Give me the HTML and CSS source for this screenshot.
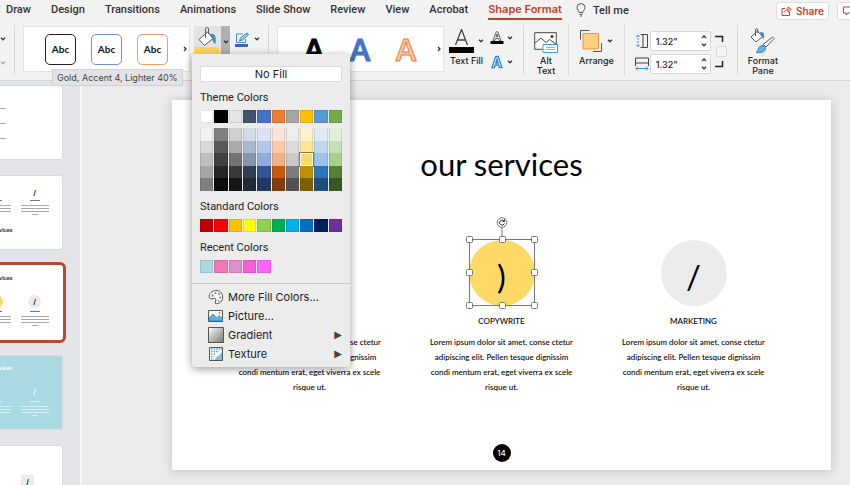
FILE: index.html
```html
<!DOCTYPE html>
<html lang="en">

<head>
    <meta charset="UTF-8">
    <meta name="viewport" content="width=device-width, initial-scale=1.0">
    <title>Our services</title>
    <link rel="stylesheet" href="styles.css">
</head>

<body>
    <!-- Shared caret shapes -->
    <svg class="defs" width="0" height="0" aria-hidden="true">
        <symbol id="down" viewBox="0 0 6 4"><path d="M1 .8l2 2 2-2" /></symbol>
        <symbol id="up" viewBox="0 0 6 4"><path d="M1 3l2-2 2 2" /></symbol>
        <symbol id="right" viewBox="0 0 4 6"><path d="M1 1l2 2-2 2" /></symbol>
    </svg>

    <header>
        <nav class="tabs">
            <a href="#">Draw</a>
            <a href="#">Design</a>
            <a href="#">Transitions</a>
            <a href="#">Animations</a>
            <a href="#">Slide Show</a>
            <a href="#">Review</a>
            <a href="#">View</a>
            <a href="#">Acrobat</a>
            <a href="#" class="active">Shape Format</a>
            <a href="#" class="tell">
                <svg width="10" height="14" viewBox="0 0 10 14" fill="none" stroke="#555"><path d="M3.2 9.5C3.2 7.500 1 7 1 4.600a4 4 0 0 1 8 0C9 7 6.800 7.500 6.800 9.500zM3.300 11.300h3.400M4 13h2" /></svg>
                Tell me
            </a>
            <div class="tab-actions">
                <button class="share">
                    <svg width="11" height="10" viewBox="0 0 11 10" fill="none" stroke="#c0442c"><path d="M4 2.500H1v7h7.500V6M3.300 6.500C3.500 4.500 5 3.700 7 3.700M7 1.200v5L10.300 3.500 7 1z" /></svg>
                    Share
                </button>
                <button class="share comments" aria-label="Comments">
                    <svg width="12" height="10" viewBox="0 0 12 10" fill="none" stroke="#c0442c"><path d="M.5 1h11v6H5L3 9V7H.500z" /></svg>
                </button>
            </div>
        </nav>

        <div class="ribbon">
            <div class="group first">
                <svg class="caret" width="6" height="4"><use href="#down" /></svg>
                <svg class="caret faded" width="6" height="4"><use href="#down" /></svg>
            </div>

            <div class="group shapes">
                <div class="gallery">
                    <button class="style-box">Abc</button>
                    <button class="style-box blue">Abc</button>
                    <button class="style-box orange">Abc</button>
                    <button class="more" aria-label="More styles"><svg class="caret" width="4" height="6"><use href="#right" /></svg></button>
                    <div class="tooltip" role="tooltip">Gold, Accent 4, Lighter 40%</div>
                </div>
                <div class="fill-split">
                    <button class="fill" aria-label="Shape Fill">
                        <svg width="25" height="28" viewBox="0 0 25 28" fill="none">
                            <path d="M16 8c5-1 6.500 2 5.500 10-2-.5-3-3-3.200-6z" fill="#3d8fc8" />
                            <path d="M5 13.500L13.500 6l5.500 6.500-8.500 7z" fill="#fff" stroke="#555" />
                            <path d="M11.500 12V3c0-2 3-2 3 0v5" stroke="#555" />
                            <path d="M0 21h25v6.500H0z" fill="#ffd55e" />
                        </svg>
                    </button>
                    <button class="fill-arrow" aria-label="Shape Fill options"><svg class="caret" width="6" height="4"><use href="#down" /></svg></button>

                    <div class="fill-menu">
                        <button class="no-fill">No Fill</button>
                        <h2>Theme Colors</h2>
                        <div class="swatches" id="theme"></div>
                        <div class="swatches shades" id="shades"></div>
                        <h2>Standard Colors</h2>
                        <div class="swatches" id="standard"></div>
                        <h2>Recent Colors</h2>
                        <div class="swatches" id="recent"></div>
                        <hr>
                        <button class="item">
                            <svg width="16" height="16" viewBox="0 0 16 16" fill="none">
                                <path d="M7.500 14.500c-.5-2 .8-3 .3-4.500C7 8.200 4.500 10.500 2.500 9.800.500 9 .8 5.500 3 3.500 5.500 1 10 .800 12.500 3c3 2.600 2.600 7.500.3 10-1.500 1.600-4 2-5.300 1.500z" fill="#fff" stroke="#555" />
                                <circle cx="4.500" cy="6.500" r="1" fill="#e0404a" /><circle cx="7.500" cy="4" r="1" fill="#4a90d9" /><circle cx="11" cy="5" r="1" fill="#58a849" /><circle cx="12.300" cy="8.500" r="1" fill="#b05ac0" /><circle cx="10.500" cy="12" r="1" fill="#e58a3a" />
                            </svg>
                            More Fill Colors...
                        </button>
                        <button class="item">
                            <svg width="16" height="16" viewBox="0 0 16 16">
                                <path d="M.5 2.500h14v11H.500z" fill="#fff" stroke="#555" />
                                <path d="M1 10l4-4 3.500 4L11 7.500l3.500 3V13H1z" fill="#62aee4" stroke="#2677b5" stroke-width=".7" />
                                <circle cx="11.500" cy="5" r="1.200" fill="#f0a04c" />
                            </svg>
                            Picture...
                        </button>
                        <button class="item">
                            <svg width="16" height="16" viewBox="0 0 16 16">
                                <defs><linearGradient id="grey" x1="0" y1="0" x2="1" y2="1"><stop offset="0" stop-color="#fff" /><stop offset="1" stop-color="#777" /></linearGradient></defs>
                                <path d="M.5.5h15v15H.500z" fill="url(#grey)" stroke="#555" />
                            </svg>
                            Gradient
                            <span class="arrow">▶</span>
                        </button>
                        <button class="item">
                            <svg width="16" height="16" viewBox="0 0 16 16">
                                <path d="M1.500 1.500h13v13h-13z" fill="#fff" stroke="#555" />
                                <path d="M3 3h11M3 5.500h8M3 8h5M3 10.500h3M3 13h3" stroke="#5aa9dd" stroke-width="1.500" stroke-dasharray="1.500 1" />
                                <path d="M14 6v8H7c0-2 1-3 2.500-3.500S11.500 8 14 6z" fill="#7dbde8" />
                            </svg>
                            Texture
                            <span class="arrow">▶</span>
                        </button>
                    </div>
                </div>
                <button class="outline" aria-label="Shape Outline">
                    <svg width="15" height="15" viewBox="0 0 15 15" fill="none">
                        <path d="M8 2H1.500v8.500h9V7" stroke="#3c8fd0" />
                        <path d="M4.500 9l1-3L12 1l1.500 1.500L7.500 8z" fill="#9fd0f2" stroke="#2d82bd" />
                        <path d="M0 12h13v3H0z" fill="#3f62b5" />
                    </svg>
                    <svg class="caret" width="6" height="4"><use href="#down" /></svg>
                </button>
            </div>

            <div class="group wordart">
                <div class="gallery">
                    <button class="letter">A</button>
                    <button class="letter blue">A</button>
                    <button class="letter orange">A</button>
                    <button class="more" aria-label="More text styles"><svg class="caret" width="4" height="6"><use href="#right" /></svg></button>
                </div>
                <button class="tool text-fill">
                    <span class="pic">
                        <svg width="25" height="24" viewBox="0 0 25 24" fill="none"><path d="M6.500 16l6-15.500 6 15.500M8.500 11h8" stroke="#444" stroke-width="1.300" /><path d="M0 18h25v6H0z" fill="#000" /></svg>
                        <svg class="caret" width="6" height="4"><use href="#down" /></svg>
                    </span>
                    Text Fill
                </button>
                <div class="stack">
                    <button class="mini" aria-label="Text Outline">
                        <svg width="14" height="14" viewBox="0 0 14 14" fill="none"><path d="M3 9.500L6.300.7h1.400L11 9.500H9.300L8.500 7.500h-3L4.700 9.500zM6 5.700h2L7 3z" stroke="#555" stroke-width=".9" /><path d="M.5 10h13v3H.500z" fill="#000" /></svg>
                        <svg class="caret" width="6" height="4"><use href="#down" /></svg>
                    </button>
                    <button class="mini" aria-label="Text Effects">
                        <svg width="14" height="14" viewBox="0 0 14 14" fill="#fff"><path d="M2 12.500L5.800 1.500h2.400L12 12.500H9.500L8.800 10H5.200L4.500 12.500zM5.800 8h2.400L7 4.200z" stroke="#2d82cf" stroke-width="1.300" /></svg>
                        <svg class="caret" width="6" height="4"><use href="#down" /></svg>
                    </button>
                </div>
            </div>

            <div class="group">
                <button class="tool">
                    <span class="pic">
                        <svg width="24" height="24" viewBox="0 0 24 24" fill="none">
                            <path d="M.7 3.700h21.600v16.600H.700z" fill="#fff" stroke="#444" />
                            <path d="M1 14l6-5 5 4.500 3.500-3L22 15" stroke="#444" />
                            <circle cx="18" cy="7.500" r="1.500" fill="#333" />
                            <path d="M9 15.500h14.500v8H9z" fill="#fff" stroke="#3c9adb" />
                            <path d="M12 18.500h9M12 20.500h9" stroke="#999" stroke-width=".8" />
                        </svg>
                    </span>
                    Alt<br>Text
                </button>
            </div>

            <div class="group">
                <button class="tool">
                    <span class="pic">
                        <svg width="24" height="24" viewBox="0 0 24 24" fill="none">
                            <path d="M1.500 10.500v-9h9M22.500 14v8.500H14" stroke="#555" />
                            <path d="M4 4.500h15.500V20H4z" fill="#fbd27d" stroke="#dd9b3c" />
                        </svg>
                        <svg class="caret" width="6" height="4"><use href="#down" /></svg>
                    </span>
                    Arrange
                </button>
            </div>

            <div class="group size">
                <div class="fields">
                    <label class="field">
                        <svg width="14" height="14" viewBox="0 0 14 14" fill="none"><path d="M3 1v12M1 3l2-2 2 2M1 11l2 2 2-2" stroke="#3c8fd0" stroke-dasharray="2 1" /><path d="M8 .5h4.500v13H8zM5.500.5H8M5.500 13.500H8" stroke="#444" /></svg>
                        <span class="spin">
                            <input type="text" value="1.32&quot;" aria-label="Height">
                            <span class="steps"><svg class="caret" width="6" height="4"><use href="#up" /></svg><svg class="caret" width="6" height="4"><use href="#down" /></svg></span>
                        </span>
                    </label>
                    <label class="field">
                        <svg width="14" height="14" viewBox="0 0 14 14" fill="none"><path d="M.5 1h13v5H.500zM.5 6v3M13.500 6v3" stroke="#444" /><path d="M1 11.500h12M3 9.500l-2 2 2 2M11 9.500l2 2-2 2" stroke="#3c8fd0" /></svg>
                        <span class="spin">
                            <input type="text" value="1.32&quot;" aria-label="Width">
                            <span class="steps"><svg class="caret" width="6" height="4"><use href="#up" /></svg><svg class="caret" width="6" height="4"><use href="#down" /></svg></span>
                        </span>
                    </label>
                </div>
                <div class="lock">
                    <svg width="9" height="7" viewBox="0 0 9 7" fill="none"><path d="M0 1.500h7.500V7" stroke="#222" stroke-width="1.500" /></svg>
                    <input type="checkbox" aria-label="Lock aspect ratio">
                    <svg width="9" height="7" viewBox="0 0 9 7" fill="none"><path d="M0 5.500h7.500V0" stroke="#222" stroke-width="1.500" /></svg>
                </div>
            </div>

            <div class="group last">
                <button class="tool">
                    <span class="pic">
                        <svg width="25" height="26" viewBox="0 0 25 26" fill="none">
                            <path d="M10 4c4-.5 4.500 2 4 7-1.500-1-2.500-2.500-3-4z" fill="#3d8fc8" />
                            <path d="M1 9l6.500-6 5 5.500-6.500 5.500z" fill="#fff" stroke="#555" />
                            <path d="M5.500 8V2c0-1.600 2.300-1.600 2.300 0v3" stroke="#555" />
                            <path d="M13 16.500L22.500 9l1.500 1.500-8 8.500z" fill="#fff" stroke="#555" />
                            <path d="M6 24.500c2-.5 1.500-2.500 3-5 1.500-2.200 4-2.500 5.500-1 1.700 2 1 4.300-1.500 5.300-2.200 1-5 1-7 .7z" fill="#6bb1e4" stroke="#2f7fbd" />
                        </svg>
                    </span>
                    Format<br>Pane
                </button>
            </div>
        </div>
    </header>

    <main>
        <aside class="thumbs" id="thumbs"></aside>

        <section class="canvas">
            <article class="slide">
                <h1>our services</h1>
                <div class="services">
                    <div class="service">
                        <div class="circle">(</div>
                        <h3>DESIGN</h3>
                        <p>Lorem ipsum dolor sit amet, conse ctetur<br>adipiscing elit. Pellen tesque dignissim<br>condi mentum erat, eget viverra ex scele<br>risque ut.</p>
                    </div>
                    <div class="service">
                        <div class="circle gold">
                            )
                            <svg class="selection" width="76" height="96" viewBox="0 0 76 96" fill="#fff" stroke="#777">
                                <path d="M5.500 24.500h65v66h-65zM38 24V12" fill="none" />
                                <rect x="2.500" y="21.500" width="6" height="6" rx="1" /><rect x="35.500" y="21.500" width="6" height="6" rx="1" /><rect x="67.500" y="21.500" width="6" height="6" rx="1" />
                                <rect x="2.500" y="54.500" width="6" height="6" rx="1" /><rect x="67.500" y="54.500" width="6" height="6" rx="1" />
                                <rect x="2.500" y="87.500" width="6" height="6" rx="1" /><rect x="35.500" y="87.500" width="6" height="6" rx="1" /><rect x="67.500" y="87.500" width="6" height="6" rx="1" />
                                <circle cx="38" cy="7.500" r="4.800" />
                                <path d="M40 6a2.500 2.500 0 1 0 .4 2.500M40.500 4.500V6.500h-2" fill="none" stroke="#333" />
                            </svg>
                        </div>
                        <h3>COPYWRITE</h3>
                        <p>Lorem ipsum dolor sit amet, conse ctetur<br>adipiscing elit. Pellen tesque dignissim<br>condi mentum erat, eget viverra ex scele<br>risque ut.</p>
                    </div>
                    <div class="service">
                        <div class="circle">/</div>
                        <h3>MARKETING</h3>
                        <p>Lorem ipsum dolor sit amet, conse ctetur<br>adipiscing elit. Pellen tesque dignissim<br>condi mentum erat, eget viverra ex scele<br>risque ut.</p>
                    </div>
                </div>
                <footer>14</footer>
            </article>
        </section>
    </main>

    <script>
        const theme = ['#ffffff', '#000000', '#e7e6e6', '#44546a', '#4472c4', '#ed7d31', '#a5a5a5', '#ffc000', '#5b9bd5', '#70ad47'];
        const shades = [
            ['#f2f2f2', '#808080', '#d0cece', '#d6dce5', '#dae3f3', '#fbe5d6', '#ededed', '#fff2cc', '#deebf7', '#e2f0d9'],
            ['#d9d9d9', '#595959', '#aeaaaa', '#adb9ca', '#b4c7e7', '#f8cbad', '#dbdbdb', '#ffe699', '#bdd7ee', '#c5e0b4'],
            ['#bfbfbf', '#404040', '#757171', '#8497b0', '#8faadc', '#f4b183', '#c9c9c9', '#ffd966', '#9dc3e6', '#a9d18e'],
            ['#a6a6a6', '#262626', '#3a3838', '#333f50', '#2f5597', '#c55a11', '#7c7c7c', '#bf9000', '#2e75b6', '#548235'],
            ['#808080', '#0d0d0d', '#161616', '#222a35', '#203864', '#843c0c', '#525252', '#7f6000', '#1f4e79', '#385723']
        ];
        const standard = ['#c00000', '#ff0000', '#ffc000', '#ffff00', '#92d050', '#00b050', '#00b0f0', '#0070c0', '#002060', '#7030a0'];
        const recent = ['#abd9e1', '#f278b4', '#df8fcb', '#f25fd9', '#ff66ff'];

        const fillSwatches = (id, colors) => {
            document.getElementById(id).innerHTML = colors.map(color => `
                <button class="swatch ${color === '#ffd966' ? 'picked' : ''}" aria-label="${color}" style="background-color: ${color}"></button>
            `).join('');
        };

        fillSwatches('theme', theme);
        fillSwatches('shades', shades.flat());
        fillSwatches('standard', standard);
        fillSwatches('recent', recent);

        // Slide thumbnails, the left part is scrolled out of the pane
        const column = mark => `<div class="mini-col"><b>${mark}</b><i class="name"></i><i></i><i></i><i></i><i class="end"></i></div>`;
        const columns = `<div class="mini-cols">${column('(')}${column(')')}${column('/')}</div>`;
        const title = '<div class="mini-title">our services</div>';

        document.getElementById('thumbs').innerHTML = `
            <div class="thumb lines"><i></i><i></i><i></i></div>
            <div class="thumb title-last">${columns}${title}</div>
            <div class="thumb selected">${title}${columns}</div>
            <div class="thumb teal">${title}${columns}</div>
            <div class="thumb boxed">${columns}</div>
        `;
    </script>
</body>

</html>
```
FILE: styles.css
```css
* {
    box-sizing: border-box;
}

body {
    margin: 0;
    height: 100vh;
    display: flex;
    flex-direction: column;
    overflow: hidden;
    font-family: Inter, "Liberation Sans", sans-serif;
    font-size: 11px;
    color: #222;
    background-color: #ebebeb;
}

button {
    padding: 0;
    border: 0;
    background: none;
    font: inherit;
    color: inherit;
}

svg {
    flex: none;
}

.defs {
    position: absolute;
}

.caret {
    fill: none;
    stroke: #333;
    stroke-width: 1.3;
}

.faded {
    opacity: 0.4;
}

header {
    background-color: #f3f2f2;
    border-bottom: 1px solid #d5d5d5;
}

/* Tabs */
.tabs {
    display: flex;
    gap: 20px;
    height: 22px;
    padding-left: 6px;
    font-family: Roboto, sans-serif;
    white-space: nowrap;
}

.tabs a {
    height: 20px;
    line-height: 19px;
    font-weight: 500;
    color: #333;
    text-decoration: none;
}

.tabs a.active {
    font-family: Inter, sans-serif;
    font-weight: 600;
    color: #bf4329;
    border-bottom: 2px solid #bf4329;
}

.tabs a.tell {
    display: flex;
    align-items: center;
    gap: 7px;
    margin-left: -6px;
}

.tab-actions {
    display: flex;
    gap: 8px;
    margin-left: auto;
    margin-right: -10px;
    padding-top: 2px;
}

.share {
    display: flex;
    align-items: center;
    justify-content: center;
    gap: 4px;
    width: 53px;
    height: 18px;
    font-family: Inter, sans-serif;
    font-size: 10px;
    font-weight: 600;
    color: #c0442c;
    background-color: #fff;
    border: 1px solid #ddd;
    border-radius: 3px;
}

.comments {
    width: 23px;
}

/* Ribbon */
.ribbon {
    display: flex;
    height: 58px;
    padding: 3px 0 5px;
}

.group {
    display: flex;
    align-items: flex-start;
    padding: 1px 10px 0;
    border-right: 1px solid #d8d8d8;
}

.group.last {
    border-right: 0;
}

.group.first {
    flex-direction: column;
    gap: 20px;
    width: 15px;
    padding: 12px 0 0;
}

.group.shapes,
.group.wordart {
    padding-left: 8px;
    padding-right: 8px;
}

.gallery {
    position: relative;
    display: flex;
    align-items: center;
    gap: 15px;
    width: 167px;
    height: 46px;
    padding-left: 21px;
    background-color: #fff;
    border: 1px solid #e2e2e2;
}

.style-box {
    flex: none;
    width: 31px;
    height: 31px;
    font-family: Lato, sans-serif;
    font-size: 10px;
    font-weight: 700;
    color: #111;
    border: 1px solid #222;
    border-radius: 5px;
}

.style-box.blue {
    border-color: #6f92cf;
}

.style-box.orange {
    border-color: #ec9a62;
}

.more {
    display: flex;
    width: 4px;
}

.tooltip {
    position: absolute;
    z-index: 1;
    top: 42px;
    left: 28px;
    padding: 0 4px;
    font-size: 9px;
    line-height: 15px;
    white-space: nowrap;
    color: #444;
    background-color: #e3e3e6;
    border: 1px solid #d2d2d4;
}

.fill-split {
    position: relative;
    display: flex;
    gap: 2px;
    height: 28px;
    margin-left: 4px;
    background-color: #e3e3e3;
}

.fill {
    display: flex;
}

.fill-arrow {
    width: 9px;
    background-color: #b0b0b0;
}

.outline {
    display: flex;
    align-items: center;
    gap: 4px;
    height: 26px;
    margin-left: 5px;
}

.wordart .gallery {
    gap: 16px;
}

.letter {
    flex: none;
    width: 30px;
    font-family: "Open Sans", sans-serif;
    font-size: 31px;
    font-weight: 600;
    line-height: 44px;
    color: #000;
    -webkit-text-stroke: 1px #000;
}

.letter.blue {
    color: #4472c4;
    -webkit-text-stroke: 1px #4472c4;
}

.letter.orange {
    color: #f8cbad;
    -webkit-text-stroke: 1px #ed7d31;
}

.tool {
    min-width: 24px;
    font-size: 9px;
    font-weight: 500;
    line-height: 10px;
    text-align: center;
}

.pic {
    display: flex;
    align-items: center;
    justify-content: center;
    gap: 4px;
    height: 30px;
}

.text-fill {
    margin-left: 5px;
}

.stack {
    display: flex;
    flex-direction: column;
    gap: 10px;
    margin-left: 6px;
    padding: 5px 2px 0 0;
}

.mini {
    display: flex;
    align-items: center;
    gap: 3px;
}

.size {
    gap: 4px;
}

.fields {
    display: flex;
    flex-direction: column;
    gap: 3px;
    padding-top: 5px;
}

.field {
    display: flex;
    align-items: center;
    gap: 1px;
}

.spin {
    display: flex;
    align-items: center;
    width: 61px;
    height: 20px;
    background-color: #fff;
    border: 1px solid #d6d6d6;
    border-radius: 2px;
}

.spin input {
    flex: 1;
    width: 0;
    padding: 0 0 0 5px;
    border: 0;
    background: none;
    font: inherit;
    font-size: 9px;
    font-weight: 500;
    color: #222;
}

.steps {
    display: flex;
    flex-direction: column;
    gap: 4px;
    padding-right: 3px;
}

.lock {
    display: flex;
    flex-direction: column;
    gap: 4px;
    padding-top: 9px;
}

.lock input {
    appearance: none;
    width: 11px;
    height: 11px;
    margin: 0 0 0 1px;
    background-color: #f4f4f4;
    border: 1px solid #d9d9d9;
    border-radius: 2px;
}

/* Shape fill menu */
.fill-menu {
    position: absolute;
    z-index: 2;
    top: 28px;
    left: -2px;
    width: 158px;
    padding: 12px 8px 4px;
    background-color: #ececec;
    border-radius: 3px;
    box-shadow: 0 2px 8px rgba(0, 0, 0, 0.4);
}

.no-fill {
    display: block;
    width: 100%;
    height: 16px;
    line-height: 14px;
    background-color: #fff;
    border: 1px solid #dcdcdc;
}

.fill-menu h2 {
    margin: 8px 0 5px;
    font-family: Roboto, sans-serif;
    font-size: 11px;
    font-weight: 400;
    line-height: 15px;
    white-space: nowrap;
}

.swatches {
    display: grid;
    grid-template-columns: repeat(10, 1fr);
    column-gap: 1px;
}

.swatch {
    height: 13px;
    border: 1px solid rgba(0, 0, 0, 0.1);
}

.shades {
    height: 63px;
    margin-top: 5px;
    grid-template-rows: repeat(5, 1fr);
}

.shades .swatch {
    height: auto;
    border-width: 0 1px;
}

.shades .swatch.picked {
    border: 1px solid #fff;
    outline: 1px solid #8d7a45;
}

.fill-menu hr {
    margin: 10px -8px 3px;
    border: 0;
    border-top: 1px solid #c8c8c8;
}

.item {
    display: flex;
    align-items: center;
    gap: 4px;
    width: 100%;
    height: 19px;
    padding-left: 8px;
    white-space: nowrap;
}

.arrow {
    margin-left: auto;
    font-family: "DejaVu Sans", sans-serif;
    font-size: 10px;
    color: #444;
}

/* Workspace */
main {
    flex: 1;
    display: flex;
    min-height: 0;
}

.thumbs {
    flex: none;
    display: flex;
    flex-direction: column;
    align-items: flex-end;
    gap: 15px;
    width: 82px;
    padding: 4px 17px 0 0;
    overflow: hidden;
    background-color: #e3e5e8;
    border-right: 2px solid #f8f8f8;
}

.thumb {
    flex: none;
    display: flex;
    flex-direction: column;
    width: 133px;
    height: 75px;
    padding-top: 8px;
    background-color: #fff;
    border: 1px solid #dadada;
    border-radius: 3px;
}

.thumb i {
    display: block;
    width: 28px;
    height: 1px;
    margin-bottom: 2px;
    background-color: #aaa;
}

.thumb i.name {
    width: 10px;
    margin-bottom: 4px;
    background-color: #777;
}

.thumb i.end {
    width: 6px;
}

.thumb.lines {
    gap: 12px;
    padding: 22px 56px 0 0;
    align-items: flex-end;
}

.thumb.selected {
    border-color: #fff;
    outline: 3px solid #b24a35;
}

.thumb.teal {
    color: #fff;
    background-color: #abd9e2;
}

.teal i,
.teal i.name {
    background-color: #d9eff3;
}

.mini-title {
    font-family: Lato, sans-serif;
    font-size: 6px;
    font-weight: 700;
    line-height: 8px;
    text-align: center;
}

.mini-cols {
    display: grid;
    grid-template-columns: repeat(3, 38px);
    justify-content: center;
    padding-top: 13px;
}

.mini-col {
    display: flex;
    flex-direction: column;
    align-items: center;
}

.mini-col b {
    width: 13px;
    height: 13px;
    margin-bottom: 3px;
    border-radius: 50%;
    font-size: 7px;
    line-height: 13px;
    text-align: center;
}

.title-last .mini-cols {
    padding: 2px 0 9px;
}

.title-last .mini-col b {
    margin-bottom: 1px;
}

.selected .mini-col b,
.boxed .mini-col b {
    background-color: #ebebeb;
}

.selected .mini-col:nth-child(2) b {
    background-color: #ffd966;
}

.boxed .mini-cols {
    padding-top: 21px;
}

.boxed .mini-col {
    padding-right: 14px;
}

.boxed .mini-col b {
    border-radius: 0;
}

.canvas {
    flex: 1;
    display: flex;
    padding: 19px 19px 15px 90px;
}

.slide {
    flex: 1;
    display: flex;
    flex-direction: column;
    align-items: center;
    padding-bottom: 8px;
    font-family: Lato, sans-serif;
    color: #000;
    background-color: #fff;
    box-shadow: 0 1px 10px rgba(0, 0, 0, 0.18);
}

.slide h1 {
    margin: 42px 0 0;
    font-size: 31px;
    font-weight: 400;
    line-height: 44px;
}

.services {
    display: grid;
    grid-template-columns: repeat(3, 192px);
    margin-top: 54px;
    text-align: center;
}

.service {
    display: flex;
    flex-direction: column;
    align-items: center;
}

.circle {
    position: relative;
    width: 66px;
    height: 66px;
    border-radius: 50%;
    font-size: 33px;
    line-height: 72px;
    background-color: #ebebeb;
}

.circle.gold {
    background-color: #ffd966;
}

.selection {
    position: absolute;
    top: -25px;
    left: -5px;
}

.service h3 {
    margin: 9px 0 8px;
    font-size: 8px;
    font-weight: 500;
    line-height: 12px;
}

.service p {
    margin: 0;
    font-size: 8px;
    font-weight: 500;
    line-height: 15px;
    white-space: nowrap;
}

.slide footer {
    width: 18px;
    height: 18px;
    margin-top: auto;
    border-radius: 50%;
    font-family: Inter, sans-serif;
    font-size: 8px;
    font-weight: 500;
    line-height: 18px;
    text-align: center;
    color: #fff;
    background-color: #000;
}
```
